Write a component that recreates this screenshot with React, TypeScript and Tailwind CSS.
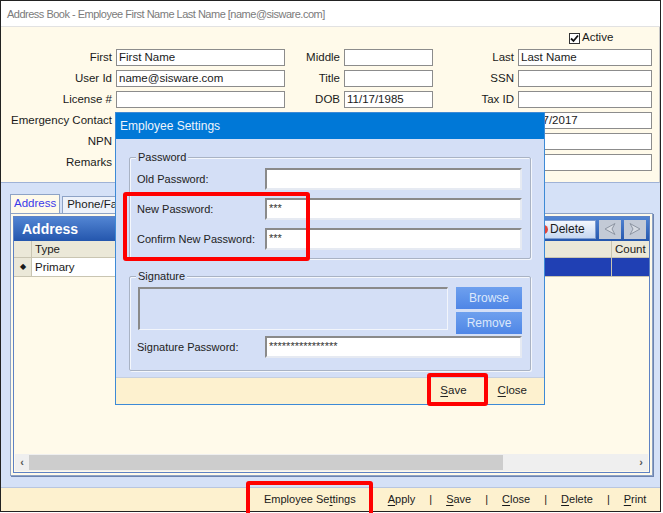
import React from "react";

type FieldProps = {
  label: string;
  labelClass: string;
  inputClass: string;
  value?: string;
};

function Field({ label, labelClass, inputClass, value }: FieldProps) {
  return (
    <div className="flex items-center">
      <div className={`${labelClass} pr-[4px] text-right whitespace-nowrap`}>{label}</div>
      <div
        className={`${inputClass} h-[17px] border border-[#8c8c8c] bg-white pl-[2px] leading-[15px] whitespace-nowrap overflow-hidden`}
      >
        {value}
      </div>
    </div>
  );
}

function FormRow({ cells }: { cells: [string, string?][] }) {
  const labelW = ["w-[115px]", "w-[59px]", "w-[85px]"];
  const inputW = ["w-[169px]", "w-[89px]", "w-[134px]"];
  return (
    <div className="flex h-[17px]">
      {cells.map(([label, value], i) => (
        <Field
          key={i}
          label={label}
          value={value}
          labelClass={labelW[i]}
          inputClass={inputW[i]}
        />
      ))}
    </div>
  );
}

function SunkenInput({ value, className }: { value?: string; className: string }) {
  return (
    <div
      className={`${className} h-[22px] bg-white border-t-2 border-l-2 border-b-2 border-r-2 border-t-[#8a8a8a] border-l-[#8a8a8a] border-b-[#e6eaf2] border-r-[#e6eaf2] pl-[2px] text-[11px] leading-[16px] text-[#333]`}
    >
      {value}
    </div>
  );
}

function GroupBox({ title, children, className }: { title: string; children: React.ReactNode; className: string }) {
  return (
    <div className={`${className} relative border border-[#a9b3c4] shadow-[inset_1px_1px_0_#f4f7fc,1px_1px_0_#f4f7fc] rounded-[2px]`}>
      <div className="absolute left-[6px] top-[-8px] bg-[#d4dff6] px-[2px] leading-[14px]">{title}</div>
      {children}
    </div>
  );
}

function Accel({ k, rest, pre = "" }: { k: string; rest: string; pre?: string }) {
  return (
    <span>
      {pre}
      <span className="underline underline-offset-2">{k}</span>
      {rest}
    </span>
  );
}

function EmployeeSettingsDialog() {
  return (
    <div className="absolute left-[115px] top-[112px] w-[430px] h-[293px] border border-[#3d8ad6] bg-[#d4dff6] flex flex-col text-[11px] text-[#222]">
      <div className="h-[26px] bg-[#0078d7] text-[#eef4fc] text-[12px] leading-[26px] pl-[4px]">Employee Settings</div>
      <div className="flex-1 pl-[13px] pt-[18px]">
        <GroupBox title="Password" className="w-[402px] h-[102px]">
          <div className="flex flex-col gap-[8px] pt-[10px] pl-[7px]">
            <div className="flex items-center">
              <div className="w-[128px]">Old Password:</div>
              <SunkenInput className="w-[257px]" />
            </div>
            <div className="flex items-center">
              <div className="w-[128px]">New Password:</div>
              <SunkenInput className="w-[257px]" value="***" />
            </div>
            <div className="flex items-center">
              <div className="w-[128px]">Confirm New Password:</div>
              <SunkenInput className="w-[257px]" value="***" />
            </div>
          </div>
        </GroupBox>
        <GroupBox title="Signature" className="w-[402px] h-[95px] mt-[17px]">
          <div className="flex pt-[10px] pl-[8px]">
            <div className="w-[310px] h-[43px] border-t-2 border-l-2 border-b border-r border-t-[#8a8a8a] border-l-[#8a8a8a] border-b-[#f2f5fb] border-r-[#f2f5fb]" />
            <div className="ml-[8px] flex flex-col gap-[3px]">
              <div className="w-[66px] h-[22px] bg-gradient-to-b from-[#6ea0ee] to-[#4f86e6] text-[#dce8fb] text-[12px] leading-[22px] text-center">Browse</div>
              <div className="w-[66px] h-[22px] bg-gradient-to-b from-[#6ea0ee] to-[#4f86e6] text-[#dce8fb] text-[12px] leading-[22px] text-center">Remove</div>
            </div>
          </div>
          <div className="flex items-center pl-[7px] mt-[2px]">
            <div className="w-[128px]">Signature Password:</div>
            <SunkenInput className="w-[257px]" value="****************" />
          </div>
        </GroupBox>
      </div>
      <div className="h-[27px] bg-[#fdf1cf] border-t border-[#c5cfe0] flex items-center justify-end pr-[17px] gap-[31px] text-[11.5px]">
        <Accel k="S" rest="ave" />
        <Accel k="C" rest="lose" />
      </div>
    </div>
  );
}

export default function App() {
  return (
    <div className="relative w-[663px] h-[513px] bg-white font-['Liberation_Sans',Arial,sans-serif] text-[11.5px] text-[#1a1a1a] overflow-hidden">
      <div className="w-[661px] h-[512px] border-l border-t border-b border-r border-[#222] flex flex-col">
        {/* title */}
        <div className="h-[26px] bg-white text-[#7b7b7b] text-[11px] tracking-[-0.5px] leading-[26px] pl-[6px] border-b border-[#e2e2e2]">
          Address Book - Employee First Name Last Name [name@sisware.com]
        </div>

        {/* employee fields */}
        <div className="h-[156px] bg-[#fffaea] border-b border-[#9fb2d6] pt-[4px] border-r border-r-[#c8c8c8]">
          <div className="flex items-center h-[14px] pl-[568px]">
            <div className="w-[11px] h-[11px] border border-[#333] bg-white flex items-center justify-center">
              <svg width="9" height="9" viewBox="0 0 9 9">
                <path d="M1 4.5 L3.5 7 L8 1.5" stroke="#111" strokeWidth="1.8" fill="none" />
              </svg>
            </div>
            <span className="ml-[2px]">Active</span>
          </div>
          <div className="flex flex-col gap-[4px] mt-[4px]">
            <FormRow cells={[["First", "First Name"], ["Middle"], ["Last", "Last Name"]]} />
            <FormRow cells={[["User Id", "name@sisware.com"], ["Title"], ["SSN"]]} />
            <FormRow cells={[["License #"], ["DOB", "11/17/1985"], ["Tax ID"]]} />
            <FormRow cells={[["Emergency Contact"], ["Phone"], ["Hire Date", "11/17/2017"]]} />
            <FormRow cells={[["NPN"], ["Email"], ["Term Date"]]} />
            <FormRow cells={[["Remarks"], ["Cell"], ["Rate"]]} />
          </div>
        </div>

        {/* tabs area */}
        <div className="flex-1 bg-[#d5e1f7] pt-[11px] pl-[9px] pr-[7px] flex flex-col">
          <div className="flex h-[19px] items-end">
            <div className="h-[19px] px-[3px] bg-[#fffaea] border border-b-0 border-[#8ea3c6] text-[#3b3bea] leading-[17px]">Address</div>
            <div className="h-[17px] ml-[2px] px-[4px] bg-[#eef2fa] border border-b-0 border-[#8ea3c6] leading-[15px]">Phone/Fax</div>
            <div className="h-[17px] ml-[2px] px-[4px] bg-[#eef2fa] border border-b-0 border-[#8ea3c6] leading-[15px]">Email</div>
          </div>
          <div className="h-[263px] border border-[#8ea3c6] bg-[#fffaea] p-[2px] shadow-[1px_1px_0_#6d84b0]">
            <div className="h-full border border-[#5e82c4] flex flex-col bg-[#fffaea]">
              <div className="h-[24px] bg-gradient-to-b from-[#5285d3] to-[#2456ad] flex items-center pl-[8px]">
                <span className="text-white font-bold text-[14px]">Address</span>
                <div className="ml-auto flex items-center h-[19px] pr-[3px] gap-[3px]">
                  <div className="h-[19px] w-[62px] bg-gradient-to-b from-[#f3f7fd] to-[#c7d8f1] flex items-center pl-[4px] border border-[#7c9bd0]">
                    <div className="w-[9px] h-[9px] rounded-full bg-[#e0453a]" />
                    <span className="ml-[2px] text-[12px] text-[#1a1a1a]">Delete</span>
                  </div>
                  <div className="h-[19px] w-[22px] bg-[#c3cad6] flex items-center justify-center">
                    <svg width="14" height="14" viewBox="0 0 14 14">
                      <path d="M12 1.5 L2 7 L12 12.5 L9 7 Z" fill="#d6dbe3" stroke="#8e96a3" strokeWidth="1" />
                    </svg>
                  </div>
                  <div className="h-[19px] w-[22px] bg-[#c3cad6] flex items-center justify-center">
                    <svg width="14" height="14" viewBox="0 0 14 14">
                      <path d="M2 1.5 L12 7 L2 12.5 L5 7 Z" fill="#d6dbe3" stroke="#8e96a3" strokeWidth="1" />
                    </svg>
                  </div>
                </div>
              </div>
              <div className="flex h-[17px] bg-[#ebe8d8] border-b border-[#c9c5b2]">
                <div className="w-[18px] border-r border-[#c9c5b2]" />
                <div className="w-[164px] pl-[3px] leading-[16px] border-r border-[#c9c5b2]">Type</div>
                <div className="flex-1 border-r border-[#c9c5b2]" />
                <div className="w-[37px] pl-[3px] leading-[16px]">Count</div>
              </div>
              <div className="flex h-[19px] border-b border-[#c9c5b2]">
                <div className="w-[18px] bg-[#ebe8d8] border-r border-[#c9c5b2] flex items-center justify-center text-[8px]">◆</div>
                <div className="w-[164px] pl-[3px] leading-[18px] bg-white border-r border-[#c9c5b2]">Primary</div>
                <div className="flex-1 bg-[#2040b4] border-r border-[#c9c5b2]" />
                <div className="w-[37px] bg-[#2040b4]" />
              </div>
              <div className="flex-1" />
              <div className="h-[17px] flex items-center bg-[#efefef] mb-[1px] mx-[1px]">
                <span className="w-[14px] text-center text-[#555] text-[11px] font-bold">‹</span>
                <div className="w-[474px] h-[15px] bg-[#cdcdcd]" />
                <div className="flex-1" />
                <span className="w-[14px] text-center text-[#555] text-[11px] font-bold">›</span>
              </div>
            </div>
          </div>
        </div>

        {/* bottom bar */}
        <div className="h-[24px] bg-[#fdf1cf] border-t border-[#b8c6e0] flex items-center text-[11px] pl-[263px]">
          <Accel pre="Employee Se" k="t" rest="tings" />
          <span className="ml-[32px]">
            <Accel k="A" rest="pply" />
          </span>
          <span className="mx-[14px]">|</span>
          <Accel k="S" rest="ave" />
          <span className="mx-[14px]">|</span>
          <Accel k="C" rest="lose" />
          <span className="mx-[14px]">|</span>
          <Accel k="D" rest="elete" />
          <span className="mx-[14px]">|</span>
          <Accel k="P" rest="rint" />
        </div>
      </div>

      <EmployeeSettingsDialog />

      {/* red highlight marks */}
      <div className="absolute left-[123px] top-[192px] w-[187px] h-[69px] border-4 border-[#ff0000] rounded-[3px]" />
      <div className="absolute left-[427px] top-[373px] w-[61px] h-[33px] border-4 border-[#ff0000] rounded-[3px]" />
      <div className="absolute left-[246px] top-[481px] w-[127px] h-[36px] border-4 border-[#ff0000] rounded-[3px]" />
    </div>
  );
}
